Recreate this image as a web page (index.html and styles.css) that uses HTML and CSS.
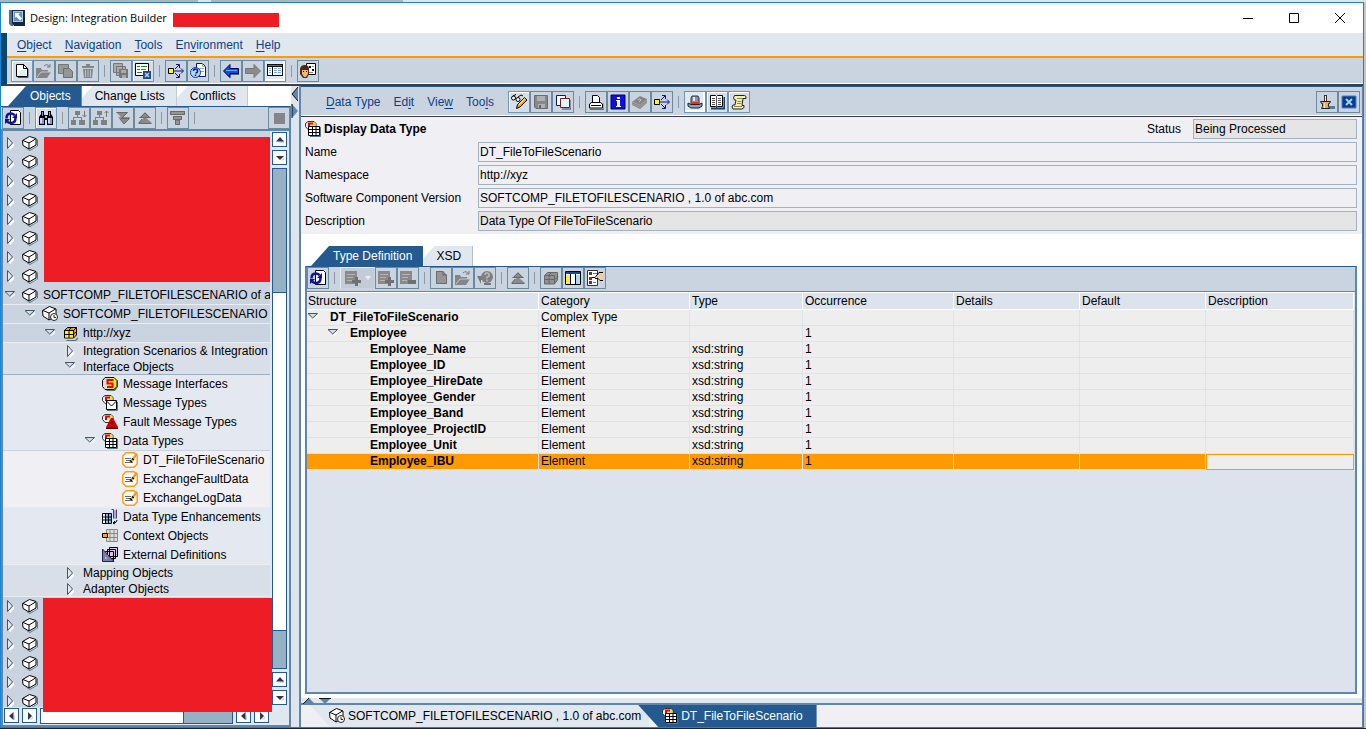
FILE: index.html
```html
<!DOCTYPE html>
<html lang="en">
<head>
    <meta charset="utf-8">
    <meta name="viewport" content="width=device-width, initial-scale=1">
    <title>Design: Integration Builder</title>
    <link rel="stylesheet" href="styles.css">
</head>
<body>
    <svg class="sprite" aria-hidden="true">
        <!-- application -->
        <symbol id="logo" viewBox="0 0 16 16"><path d="M0 0h4v16H2L0 14z" fill="#4f7290"/><path d="M3 0h13v16H5l-2-3z" fill="#17263c"/><path d="M4 1h10v11H4z" fill="#a9cbe6"/><path d="M5 2h8v9H5z" fill="#5f92c2"/><path d="M6 3h5L9.500 4.500l3.500 4-2 2-4-4L6 8z" fill="#fff"/></symbol>
        <symbol id="new" viewBox="0 0 16 16"><path d="M4 14.500h10V6" fill="none" stroke="#456"/><path d="M2.500 1.500h7l4 4v8h-11z" fill="#fff" stroke="#000"/><path d="M5 8l7-2v7H5z" fill="#d6f2f8"/><path d="M9.500 1.500v4h4" fill="none" stroke="#000"/></symbol>
        <symbol id="doc" viewBox="0 0 16 16"><path d="M3 1h7l4 4v9H3z" fill="#959595"/><path d="M10 1v4h4" fill="none" stroke="#666"/><path d="M3.500 1.500h6l4 4v8h-10z" fill="none" stroke="#6c6c6c"/></symbol>
        <symbol id="open" viewBox="0 0 16 16"><path d="M0 5h5l1 2h6v2h3l-4 6H0z" fill="#858585"/><path d="M1 14l4-5h10" fill="none" stroke="#c2c8ce"/><path d="M8 3q3-3 6 1m0-3v3h-3" fill="none" stroke="#777"/></symbol>
        <symbol id="copy" viewBox="0 0 16 16"><path d="M.5 1.500h10v9H.5z" fill="#999" stroke="#777"/><path d="M5.500 5.500h6l3 3v6h-9z" fill="#959595" stroke="#6e6e6e"/></symbol>
        <symbol id="trash" viewBox="0 0 16 16"><path d="M2 3h12v2H2zM6 1h4v2H6zM3 6h10l-1 9H4z" fill="#858585"/><path d="M5.500 7v7m2.500-7v7m2.500-7v7" stroke="#b8bec5"/></symbol>
        <symbol id="stack" viewBox="0 0 16 16"><path d="M.5.5h9v9h-9zM3.500 3.500h9v9h-9z" fill="#aaa" stroke="#777"/><path d="M6 6h9v9H7l-1-1z" fill="#777"/><path d="M8 7h5v3H8zM9 12h4v3H9z" fill="#aaa"/></symbol>
        <symbol id="listx" viewBox="0 0 16 16"><path d="M.5.500h13v12H.5z" fill="#fff" stroke="#000"/><path d="M2 3.500h3m1 0h6M2 6.500h3m1 0h5M2 9.500h5" stroke="#228622"/><path d="M8 8h8v8H8z" fill="#1c4b82"/><path d="M10 10l4 4m0-4l-4 4" stroke="#b5d0ee" stroke-width="1.500"/></symbol>
        <symbol id="where" viewBox="0 0 16 16"><path d="M.5 5.500h5v5h-5z" fill="#ff0" stroke="#000"/><path d="M6 8h9M7 6l4-4M7 10l4 4M13 5.500L15.500 8 13 10.500M8 1.500h3.500V5M8 14.500h3.500V11" fill="none" stroke="#10108a"/></symbol>
        <symbol id="helpdoc" viewBox="0 0 16 16"><path d="M6.500.5h6l3 3v10h-9z" fill="#fff" stroke="#10108a"/><path d="M12.500.5v3h3M9 5.500h5M9 8.500h5" fill="none" stroke="#8aa"/><circle cx="5.500" cy="9.500" r="5" fill="#a9dcfa" stroke="#143a90"/><path d="M3.500 8q0-2 2-2t2 2-2 2m0 1.500v1.500" fill="none" stroke="#10108a" stroke-width="1.500"/></symbol>
        <symbol id="left" viewBox="0 0 16 16"><path d="M1 9l6 6v-3h9V8H8" fill="#567"/><path d="M.5 8L7 1.500v4h8.500v5H7v4z" fill="#1848e8" stroke="#000068"/><path d="M3 7.500h11" stroke="#4bb8ff"/></symbol>
        <symbol id="right" viewBox="0 0 16 16"><path d="M15.500 8L9 1.500v4H.5v5H9v4z" fill="#8b8b8b" stroke="#777"/></symbol>
        <symbol id="panel" viewBox="0 0 16 16"><path d="M0 1h16v12H0z" fill="#111"/><path d="M1 4h4v8H1zM6 4h9v8H6z" fill="#fff"/><path d="M1 2h14v1H1z" fill="#2f75bd"/><path d="M2 5.500h2M2 7.500h2M2 9.500h2m3-4h3m1 0h3M7 7.500h3m1 0h3M7 9.500h3m1 0h3" stroke="#79a8db"/></symbol>
        <symbol id="user" viewBox="0 0 16 16"><path d="M6.500.5h9v11h-9z" fill="#fff" stroke="#000"/><path d="M9 3h2v2H9zM12 6h2v2h-2z" fill="#111"/><path d="M12 3.500h2M9 9.500h4" stroke="#888"/><path d="M0 7q0-5 5-5 4 0 4 4v5l-2 4H3l-3-4z" fill="#4b2a12"/><path d="M2 7h6v4l-2 3H4l-2-3z" fill="#f0b47a"/><path d="M3 8h1v1H3zM6 8h1v1H6z" fill="#000"/></symbol>

        <!-- object list toolbar -->
        <symbol id="refresh" viewBox="0 0 16 16"><path d="M5.500.5h8l2 2v12h-10z" fill="#fff" stroke="#000"/><path d="M1.500 8.500q0-5 4-5 3 0 4 2M10.500 8q0 5-4.500 5Q3 13 2 11" fill="none" stroke="#1111a0" stroke-width="2.500"/><path d="M12 3v5H7zM0 14V9h5z" fill="#1111a0"/></symbol>
        <symbol id="find" viewBox="0 0 16 16"><path d="M3 1h3v4l1 2v8H1V7l2-3zM10 1h3v3l2 3v8H9V7l1-2z" fill="#000"/><path d="M2 8h4v6H2zM10 8h4v6h-4zM4 2h1v4H4zM11 2h1v4h-1z" fill="#8f8fd8"/><path d="M2 8h2v5H2zM10 8h2v5h-2z" fill="#d5d5ff"/><path d="M6 5h4v5H6z" fill="#000"/><path d="M7 6h2v2H7z" fill="#b5b5f0"/></symbol>
        <symbol id="tree" viewBox="0 0 16 16"><path d="M4 1h5v4H4zM0 10h5v5H0zM8 10h6v5H8zM2 7h9v1H2zM2 8h1v2H2zM10 8h1v2h-1zM6 5h1v2H6z" fill="#808080"/><path d="M13.500 1v6M11.500 5l2 2 2-2" fill="none" stroke="#777"/></symbol>
        <symbol id="treeup" viewBox="0 0 16 16"><path d="M4 1h5v4H4zM0 10h5v5H0zM8 10h6v5H8zM2 7h9v1H2zM2 8h1v2H2zM10 8h1v2h-1zM6 5h1v2H6z" fill="#808080"/><path d="M13.500 1v6M11.500 3l2-2 2 2" fill="none" stroke="#777"/></symbol>
        <symbol id="ddown" viewBox="0 0 16 16"><path d="M1 2h12L7 8zM3 7h12l-6 7z" fill="#8a8a8a"/><path d="M1.500 2.500h11L7 8M6 8.500h8.500L9 14 5 9" fill="none" stroke="#696969"/></symbol>
        <symbol id="dup" viewBox="0 0 16 16"><path d="M2 8h12L8 2zM1 13h14L8 7z" fill="#8a8a8a"/><path d="M2.500 7.500h11M1.500 13.500h13M3 8l5-5 5 5M2 13l3-4" fill="none" stroke="#696969"/></symbol>
        <symbol id="filter" viewBox="0 0 16 16"><path d="M0 1h15v4H0zM3 6h9v4H3zM5 10h5v5H5z" fill="#959595"/><path d="M.5 1.500h14v3H.5zM3.500 6.500h8v3h-8zM5.500 10h4v4.500h-4z" fill="none" stroke="#696969"/></symbol>
        <symbol id="stop" viewBox="0 0 16 16"><path d="M3 3h11v11H3z" fill="#858585"/></symbol>

        <!-- tree -->
        <symbol id="tri" viewBox="0 0 9 14"><path d="M3 12l5-5v3l-4 4z" fill="#fff"/><path d="M1.500 1.500L6.500 7l-5 5.500z" fill="#e4e9ef" stroke="#4a5361"/></symbol>
        <symbol id="trid" viewBox="0 0 12 8"><path d="M6 8l5-5v2L7 8z" fill="#fff"/><path d="M1 1.500h9.500L5.700 6z" fill="#cfe0e8" stroke="#4a5361"/></symbol>
        <symbol id="cube" viewBox="0 0 16 16"><path d="M3 13l5 3 8-5V5l-1-1v7l-7 4z" fill="#557a86"/><path d="M.5 5.500l7-4 6.500 2v6.500l-7 4-6-3.500z" fill="#fff" stroke="#000"/><path d="M1 5.500L7 8l6.500-4M7 8v6" fill="none" stroke="#000"/></symbol>
        <symbol id="cubev" viewBox="0 0 16 16"><path d="M.5 4.500l7-4L14 3v7l-7 4-6-4z" fill="#fff" stroke="#000"/><path d="M1 4.500L7 7l6.500-4M7 7v7" fill="none" stroke="#000"/><circle cx="12" cy="11" r="3.500" fill="#fff" stroke="#222"/><path d="M12 9v2.500h2" fill="none" stroke="#222"/></symbol>
        <symbol id="pkg" viewBox="-2 -1 16 16"><path d="M2 14h9l3-3V5l1 1v6l-3 3H3z" fill="#557a86"/><path d="M.5 4.500l3-3h9v7.500l-3 3h-9z" fill="#e8a800" stroke="#000"/><path d="M1 5h8v6.500H1z" fill="#ffed20"/><path d="M.5 4.500h9V12M5 4.500V12M1 8.500h8l3-2.500M5 4l2.500-2.500M9.500 4.500l3-3" fill="none" stroke="#000"/></symbol>
        <symbol id="msgif" viewBox="0 0 16 16"><path d="M4 15h9l3-4V4" fill="#557a86"/><path d="M3 1.500h9l3 3v6L12 13.500H3L.5 10.500v-6z" fill="#ffed20" stroke="#000"/><path d="M4 2h3L5 7l2 6H3L1 10V4.500z" fill="#d9dde0"/><path d="M11.500 4h-6v3.500h5V11H5" fill="none" stroke="#e00" stroke-width="2"/></symbol>
        <symbol id="msg" viewBox="0 0 16 16"><path d="M3 .5h6l2 2v6H3l-2.500-3v-3z" fill="#eee" stroke="#333"/><path d="M7 1h2l1.500 2v4H7z" fill="#ffe01a"/><path d="M8 2.500H4V6" fill="none" stroke="#e00" stroke-width="2"/><path d="M5 15.500h10.500V7" fill="none" stroke="#557a86"/><path d="M4.500 5.500h10v9h-10z" fill="#fff" stroke="#000"/><path d="M4.500 6l5 5 5-5" fill="none" stroke="#000"/></symbol>
        <symbol id="fault" viewBox="0 0 16 16"><path d="M3 .5h6l2 2v6H3l-2.500-3v-3z" fill="#eee" stroke="#333"/><path d="M7 1h2l1.500 2v4H7z" fill="#ffe01a"/><path d="M8 2.500H4V6" fill="none" stroke="#e00" stroke-width="2"/><path d="M9 4h2l5 9v2H4v-2z" fill="#d40000"/><path d="M4 14.500h12" stroke="#500"/><path d="M10 7v4m0 1v2" stroke="#400"/></symbol>
        <symbol id="dt" viewBox="0 0 16 16"><path d="M3 .5h6l2 2v6H3l-2.500-3v-3z" fill="#eee" stroke="#333"/><path d="M7 1h2l1.500 2v4H7z" fill="#ffe01a"/><path d="M8 2.500H4V6" fill="none" stroke="#e00" stroke-width="2"/><path d="M5 15.500h10.500V6" fill="none" stroke="#557a86"/><path d="M3.500 5.500h11v9h-11zM3.500 8.500h11m-11 3h11M7.500 5.500v9m3.500-9v9" fill="#fff" stroke="#000"/></symbol>
        <symbol id="edit" viewBox="0 0 16 16"><path d="M4 .8h8l3.200 3.200v8L12 15.200H4L.8 12V4z" fill="#fff" stroke="#ff9c10" stroke-width="1.500"/><path d="M3 6.500h6M4 8.500h5M3 10.500h8" stroke="#666"/><path d="M8 9l6-8 2 1.500-6 7-3 1z" fill="#f09a1c"/><path d="M10 6.500l2 1.500M8 8.500l2 1.500" stroke="#000" stroke-width="1.500"/></symbol>
        <symbol id="enh" viewBox="0 0 16 16"><path d="M.5 4.500h9v10h-9z" fill="#fff" stroke="#000"/><path d="M4 5h5v9H4z" fill="#7ac0f4"/><path d="M0 8h10M0 11h10M3.500 4v11M6.500 4v11" stroke="#000"/><path d="M9.500.5h2v9M14.500.5v9" fill="none" stroke="#446"/><path d="M12 1h2v9h-2z" fill="#b9a6d6"/><path d="M15 11q0 3-4 3m2-2l-2 2 2 1" fill="none" stroke="#000"/></symbol>
        <symbol id="ctx" viewBox="0 0 16 16"><path d="M4.500 1.500h11v12h-11zM4 5.500h12M4 9.500h12M8 1v13M12 1v13" fill="#ddd" stroke="#888"/><path d="M.5 5.500h5v4h-5z" fill="#ffab00" stroke="#000"/></symbol>
        <symbol id="ext" viewBox="0 0 16 16"><path d="M7.500.5h8v9h-8zM5.500 2.500h8v9h-8zM3.500 4.500h8v9h-8z" fill="#d9c8e2" stroke="#000"/><path d="M.5 2v12.500H12z" fill="#7b7ba8" stroke="#224"/><path d="M3 9v3h3z" fill="#b5b5d0"/></symbol>

        <!-- data type editor -->
        <symbol id="glasses" viewBox="0 0 16 16"><circle cx="2.500" cy="4" r="2" fill="#fff" stroke="#000"/><circle cx="7" cy="5.500" r="2" fill="#fff" stroke="#000"/><path d="M2 2l3-1.500M7 3l3-2 2 1" fill="none" stroke="#000"/><path d="M5.500 14.500l1-4 7-7 2.500 2.500-7 7z" fill="#f0a020" stroke="#000"/><path d="M8 10.500l6-6" stroke="#ffe060" stroke-width="1.500"/></symbol>
        <symbol id="save" viewBox="0 0 16 16"><path d="M1.500 1.500h13v13H3l-1.500-1.500z" fill="#888" stroke="#6b6b6b"/><path d="M4 2h8v5H4zM5 10h7v4H5z" fill="#b0b0b0"/><path d="M6 11h2v3H6z" fill="#666"/></symbol>
        <symbol id="copy2" viewBox="0 0 16 16"><path d="M1.500 1.500h9v10h-9z" fill="#fff" stroke="#11118a"/><path d="M7 15h9V6" stroke="#446" fill="none"/><path d="M5.500 4.500h9v9h-9z" fill="#e5f6fb" stroke="#6b1f1f"/></symbol>
        <symbol id="print" viewBox="0 0 16 16"><path d="M4.500 9.500v-8h5l2 2v6" fill="#fff" stroke="#000"/><path d="M2 15.500h14V9" fill="none" stroke="#667"/><path d="M1.500 10l2-1.500h9l2 1.500v4h-13z" fill="#fff" stroke="#000"/><path d="M3 11.500h10" stroke="#000"/></symbol>
        <symbol id="info" viewBox="0 0 16 16"><path d="M1 1h14v14H1z" fill="#1010dc" stroke="#000070"/><path d="M7 3h3v2H7zM6 6h4v6h1v1H6v-1h1V7H6z" fill="#fff"/></symbol>
        <symbol id="book" viewBox="0 0 16 16"><path d="M0 8l8-6 7 3v4l-7 6-8-4z" fill="#858585"/><path d="M0 10l8 3 7-5M0 8l8 3 7-5" fill="none" stroke="#a4a4a4"/><path d="M6 6q2-2 3 0L7 8" fill="none" stroke="#c4c4c4"/></symbol>
        <symbol id="hat" viewBox="0 0 16 16"><path d="M5 2h6l1 2v6H4V4z" fill="#7f98af" stroke="#333"/><path d="M4 8h8v2.500H4z" fill="#f22"/><path d="M1 9l3 1.500h8L15 9v3l-3 2H4l-3-2z" fill="#8ba3b8" stroke="#222"/><path d="M6 3h2v4H6z" fill="#dfe8f0"/></symbol>
        <symbol id="pages" viewBox="0 0 16 16"><path d="M2 14.500h13.500V3" fill="none" stroke="#146" stroke-width="2"/><path d="M1.500 1.500h5l1 1 1-1h5v11h-5l-1 1-1-1h-5z" fill="#fff" stroke="#000"/><path d="M7.500 2v11M3 4.500h3m3 0h3M3 6.500h3m3 0h3M3 8.500h3m3 0h3M3 10.500h3m3 0h3" stroke="#555"/></symbol>
        <symbol id="scroll" viewBox="0 0 16 16"><path d="M3.500 1.500h10q2 0 1.500 3h-3l-1 7h2v2l-2 1.500h-9q-2-2 0-4h2l1-5H3.500q-2-2 0-4.500z" fill="#f4f0b0" stroke="#222"/><path d="M6 4.500h6M6.500 7.500h4M6 9.500h4M3 12.500h8" stroke="#8a8550"/></symbol>
        <symbol id="pin" viewBox="0 0 16 16"><path d="M10 12h6v3H8z" fill="#557a96"/><path d="M5 1h3v6H5z" fill="#333"/><path d="M6 2h1v5H6z" fill="#fff"/><path d="M1.500 7.500h10l-1 2h-1v3l1 2h-8l1-2v-3h-1z" fill="#deac76" stroke="#222"/><path d="M5.500 9v5" stroke="#ffe4bd"/></symbol>
        <symbol id="close" viewBox="0 0 16 16"><path d="M1 2h14v12H1z" fill="#0a3f86" stroke="#4a7bd0"/><path d="M5 5l6 6m0-6l-6 6" stroke="#a6cdf4" stroke-width="2"/></symbol>
        <symbol id="addrow" viewBox="0 0 16 16"><path d="M0 1h12v13H0z" fill="#8a8a8a"/><path d="M2 4.500h8M2 7.500h6M2 10.500h5" stroke="#b4b4b4"/><path d="M10 7h3v3h3v3h-3v3h-3v-3H7v-3h3z" fill="#707070"/></symbol>
        <symbol id="delrow" viewBox="0 0 16 16"><path d="M0 1h12v13H0z" fill="#8a8a8a"/><path d="M2 4.500h8M2 7.500h6M2 10.500h5" stroke="#b4b4b4"/><path d="M8 10h8v4H8z" fill="#707070"/></symbol>
        <symbol id="query" viewBox="0 0 16 16"><path d="M0 6h6v4H4v4z" fill="#777"/><circle cx="10" cy="7" r="6" fill="#808080"/><path d="M8 5q0-2 2-2t2 2-2 2v1.500m0 1v2" fill="none" stroke="#bbb" stroke-width="1.500"/><path d="M7 13h7v2H7z" fill="#777"/></symbol>
        <symbol id="gpkg" viewBox="0 0 16 16"><path d="M1.500 5.500l3-3h10v7.500l-3 4h-10z" fill="#929292" stroke="#666"/><path d="M2 5.500h9.500V14M6 6v8M2 9.500h10l3-3M6 5l3-3" fill="none" stroke="#666"/></symbol>
        <symbol id="columns" viewBox="0 0 16 16"><path d="M.5 1.500h15v13H.5z" fill="#fff" stroke="#000"/><path d="M1 2h14v2H1z" fill="#104c90"/><path d="M1 5h4v9H1z" fill="#ffed3a"/><path d="M5.500 4v10m5-10v10" stroke="#000"/><path d="M11 5h4v9h-4z" fill="#a7daf6"/></symbol>
        <symbol id="settings" viewBox="0 0 16 16"><path d="M.5.5h10v15H.5z" fill="#fff" stroke="#333"/><path d="M2 2h3v3H2zM2 11h3v3H2z" fill="#444"/><path d="M2 7h3v3H2z" fill="#e00"/><path d="M6 3.500h4M6 12.500h3" stroke="#777"/><path d="M9 6l3-3h4v7h-3l-2-2z" fill="#f1cda6"/><path d="M5 7.500h3l4-5h4M8 8.500h3l2 2h3" fill="none" stroke="#000"/></symbol>
        <symbol id="up" viewBox="0 0 8 6"><path d="M2 6h6V3z" fill="#cdd2ee"/><path d="M4 0l4 4.500H0z" fill="#333348"/></symbol>
        <symbol id="down" viewBox="0 0 8 6"><path d="M5 6l3-4v3z" fill="#cdd2ee"/><path d="M4 5L0 1h8z" fill="#333348"/></symbol>
        <symbol id="prev" viewBox="0 0 6 8"><path d="M3 7l3-5v6z" fill="#cdd2ee"/><path d="M0 4l4.500-4v8z" fill="#333348"/></symbol>
        <symbol id="next" viewBox="0 0 6 8"><path d="M2 8l4-4v3z" fill="#cdd2ee"/><path d="M5 4L1 0v8z" fill="#333348"/></symbol>
    </svg>

    <div class="desktop-strip"></div>
    <div class="window">
        <header class="titlebar">
            <svg class="icon"><use href="#logo"/></svg>
            <h1 class="window-title">Design: Integration Builder</h1>
            <span class="redacted"></span>
            <div class="window-buttons">
                <button aria-label="Minimize"><svg viewBox="0 0 12 12"><path d="M1 6.500h10"/></svg></button>
                <button aria-label="Maximize"><svg viewBox="0 0 12 12"><path d="M1.500 1.500h9v9h-9z"/></svg></button>
                <button aria-label="Close"><svg viewBox="0 0 12 12"><path d="M1 1l10 10M11 1L1 11"/></svg></button>
            </div>
        </header>

        <div class="app-bars">
            <nav class="menubar">
                <button><u>O</u>bject</button>
                <button><u>N</u>avigation</button>
                <button><u>T</u>ools</button>
                <button>En<u>v</u>ironment</button>
                <button><u>H</u>elp</button>
            </nav>
            <div class="toolbar main-toolbar">
                <button class="tool lit" aria-label="New"><svg class="icon"><use href="#new"/></svg></button>
                <button class="tool" aria-label="Open" disabled><svg class="icon"><use href="#open"/></svg></button>
                <button class="tool" aria-label="Copy" disabled><svg class="icon"><use href="#copy"/></svg></button>
                <button class="tool" aria-label="Delete" disabled><svg class="icon"><use href="#trash"/></svg></button>
                <i class="sep"></i>
                <button class="tool" aria-label="Transport" disabled><svg class="icon"><use href="#stack"/></svg></button>
                <button class="tool lit" aria-label="Close list"><svg class="icon"><use href="#listx"/></svg></button>
                <i class="sep"></i>
                <button class="tool" aria-label="Where used"><svg class="icon"><use href="#where"/></svg></button>
                <button class="tool" aria-label="Find object"><svg class="icon"><use href="#helpdoc"/></svg></button>
                <i class="sep"></i>
                <button class="tool" aria-label="Back"><svg class="icon"><use href="#left"/></svg></button>
                <button class="tool" aria-label="Forward" disabled><svg class="icon"><use href="#right"/></svg></button>
                <button class="tool pressed" aria-label="Navigation area"><svg class="icon"><use href="#panel"/></svg></button>
                <i class="sep"></i>
                <button class="tool" aria-label="User settings"><svg class="icon"><use href="#user"/></svg></button>
            </div>
        </div>

        <main class="workspace">
            <aside class="browser">
                <div class="tabs">
                    <button class="tab active">Objects</button>
                    <button class="tab">Change Lists</button>
                    <button class="tab">Conflicts</button>
                </div>
                <div class="toolbar">
                    <button class="tool" aria-label="Refresh"><svg class="icon"><use href="#refresh"/></svg></button>
                    <i class="sep"></i>
                    <button class="tool lit" aria-label="Find"><svg class="icon"><use href="#find"/></svg></button>
                    <i class="sep"></i>
                    <button class="tool" aria-label="Expand" disabled><svg class="icon"><use href="#tree"/></svg></button>
                    <button class="tool" aria-label="Collapse" disabled><svg class="icon"><use href="#treeup"/></svg></button>
                    <button class="tool" aria-label="Next level" disabled><svg class="icon"><use href="#ddown"/></svg></button>
                    <button class="tool" aria-label="Previous level" disabled><svg class="icon"><use href="#dup"/></svg></button>
                    <i class="sep"></i>
                    <button class="tool" aria-label="Filter" disabled><svg class="icon"><use href="#filter"/></svg></button>
                    <i class="sep"></i>
                    <button class="tool push" aria-label="Stop" disabled><svg class="icon"><use href="#stop"/></svg></button>
                </div>
                <div class="tree-area">
                    <ul class="tree">
                        <li class="node"><svg class="twist"><use href="#tri"/></svg><svg class="icon"><use href="#cube"/></svg></li>
                        <li class="node"><svg class="twist"><use href="#tri"/></svg><svg class="icon"><use href="#cube"/></svg></li>
                        <li class="node"><svg class="twist"><use href="#tri"/></svg><svg class="icon"><use href="#cube"/></svg></li>
                        <li class="node"><svg class="twist"><use href="#tri"/></svg><svg class="icon"><use href="#cube"/></svg></li>
                        <li class="node"><svg class="twist"><use href="#tri"/></svg><svg class="icon"><use href="#cube"/></svg></li>
                        <li class="node"><svg class="twist"><use href="#tri"/></svg><svg class="icon"><use href="#cube"/></svg></li>
                        <li class="node"><svg class="twist"><use href="#tri"/></svg><svg class="icon"><use href="#cube"/></svg></li>
                        <li class="node"><svg class="twist"><use href="#tri"/></svg><svg class="icon"><use href="#cube"/></svg></li>
                        <li class="node end"><svg class="twist open"><use href="#trid"/></svg><svg class="icon"><use href="#cube"/></svg>SOFTCOMP_FILETOFILESCENARIO of abc.com</li>
                        <li class="node l1 end"><svg class="twist open"><use href="#trid"/></svg><svg class="icon"><use href="#cubev"/></svg>SOFTCOMP_FILETOFILESCENARIO ,</li>
                        <li class="node l2 end"><svg class="twist open"><use href="#trid"/></svg><svg class="icon"><use href="#pkg"/></svg>http://xyz</li>
                        <li class="node l3 folder"><svg class="twist"><use href="#tri"/></svg>Integration Scenarios &amp; Integration</li>
                        <li class="node l3 folder rule"><svg class="twist open"><use href="#trid"/></svg>Interface Objects</li>
                        <li class="node l4 pale"><svg class="icon"><use href="#msgif"/></svg>Message Interfaces</li>
                        <li class="node l4 pale"><svg class="icon"><use href="#msg"/></svg>Message Types</li>
                        <li class="node l4 pale"><svg class="icon"><use href="#fault"/></svg>Fault Message Types</li>
                        <li class="node l4 pale branch"><svg class="twist open"><use href="#trid"/></svg><svg class="icon"><use href="#dt"/></svg>Data Types</li>
                        <li class="node l5 leaf"><svg class="icon"><use href="#edit"/></svg>DT_FileToFileScenario</li>
                        <li class="node l5 leaf"><svg class="icon"><use href="#edit"/></svg>ExchangeFaultData</li>
                        <li class="node l5 leaf end"><svg class="icon"><use href="#edit"/></svg>ExchangeLogData</li>
                        <li class="node l4 pale"><svg class="icon"><use href="#enh"/></svg>Data Type Enhancements</li>
                        <li class="node l4 pale"><svg class="icon"><use href="#ctx"/></svg>Context Objects</li>
                        <li class="node l4 pale end"><svg class="icon"><use href="#ext"/></svg>External Definitions</li>
                        <li class="node l3 folder"><svg class="twist"><use href="#tri"/></svg>Mapping Objects</li>
                        <li class="node l3 folder end"><svg class="twist"><use href="#tri"/></svg>Adapter Objects</li>
                        <li class="node"><svg class="twist"><use href="#tri"/></svg><svg class="icon"><use href="#cube"/></svg></li>
                        <li class="node"><svg class="twist"><use href="#tri"/></svg><svg class="icon"><use href="#cube"/></svg></li>
                        <li class="node"><svg class="twist"><use href="#tri"/></svg><svg class="icon"><use href="#cube"/></svg></li>
                        <li class="node"><svg class="twist"><use href="#tri"/></svg><svg class="icon"><use href="#cube"/></svg></li>
                        <li class="node"><svg class="twist"><use href="#tri"/></svg><svg class="icon"><use href="#cube"/></svg></li>
                        <li class="node"><svg class="twist"><use href="#tri"/></svg><svg class="icon"><use href="#cube"/></svg></li>
                    </ul>
                    <div class="vscroll">
                        <button aria-label="Scroll up"><svg class="arrow"><use href="#up"/></svg></button>
                        <button aria-label="Scroll down"><svg class="arrow"><use href="#down"/></svg></button>
                        <div class="track"><div class="thumb"></div></div>
                        <button aria-label="Scroll up"><svg class="arrow"><use href="#up"/></svg></button>
                        <button aria-label="Scroll down"><svg class="arrow"><use href="#down"/></svg></button>
                    </div>
                    <div class="hscroll">
                        <button aria-label="Scroll left"><svg class="arrow side"><use href="#prev"/></svg></button>
                        <button aria-label="Scroll right"><svg class="arrow side"><use href="#next"/></svg></button>
                        <div class="track"><div class="thumb"></div></div>
                        <button aria-label="Scroll left"><svg class="arrow side"><use href="#prev"/></svg></button>
                        <button aria-label="Scroll right"><svg class="arrow side"><use href="#next"/></svg></button>
                    </div>
                    <div class="mask mask-top"></div>
                    <div class="mask mask-bottom"></div>
                </div>
            </aside>

            <div class="splitter">
                <svg viewBox="0 0 8 36"><path d="M7 1L1 8l6 7z" fill="#5f87ad"/><path d="M7 1L1 8l6 7" fill="none" stroke="#111"/><path d="M1 18l6 7-6 7z" fill="#5f87ad"/><path d="M1 18v14" stroke="#111"/></svg>
            </div>

            <section class="editor">
                <div class="editor-bar">
                    <nav class="menubar">
                        <button><u>D</u>ata Type</button>
                        <button>Ed<u>i</u>t</button>
                        <button>Vie<u>w</u></button>
                        <button>Too<u>l</u>s</button>
                    </nav>
                    <div class="toolbar">
                        <button class="tool lit" aria-label="Switch between display and edit"><svg class="icon"><use href="#glasses"/></svg></button>
                        <button class="tool" aria-label="Save" disabled><svg class="icon"><use href="#save"/></svg></button>
                        <button class="tool" aria-label="Copy object"><svg class="icon"><use href="#copy2"/></svg></button>
                        <i class="sep"></i>
                        <button class="tool" aria-label="Print"><svg class="icon"><use href="#print"/></svg></button>
                        <button class="tool" aria-label="Properties"><svg class="icon"><use href="#info"/></svg></button>
                        <button class="tool" aria-label="Documentation" disabled><svg class="icon"><use href="#book"/></svg></button>
                        <button class="tool" aria-label="Where used"><svg class="icon"><use href="#where"/></svg></button>
                        <i class="sep"></i>
                        <button class="tool pressed" aria-label="Header"><svg class="icon"><use href="#hat"/></svg></button>
                        <button class="tool lit" aria-label="Details"><svg class="icon"><use href="#pages"/></svg></button>
                        <button class="tool lit" aria-label="History"><svg class="icon"><use href="#scroll"/></svg></button>
                        <button class="tool push" aria-label="Detach"><svg class="icon"><use href="#pin"/></svg></button>
                        <button class="tool" aria-label="Close editor"><svg class="icon"><use href="#close"/></svg></button>
                    </div>
                </div>

                <form class="details">
                    <div class="details-head">
                        <svg class="icon"><use href="#dt"/></svg>
                        <h2>Display Data Type</h2>
                        <label for="status">Status</label>
                        <input id="status" class="field grey" value="Being Processed" readonly>
                    </div>
                    <label for="name">Name</label>
                    <input id="name" class="field" value="DT_FileToFileScenario" readonly>
                    <label for="namespace">Namespace</label>
                    <input id="namespace" class="field" value="http://xyz" readonly>
                    <label for="version">Software Component Version</label>
                    <input id="version" class="field" value="SOFTCOMP_FILETOFILESCENARIO , 1.0 of abc.com" readonly>
                    <label for="description">Description</label>
                    <input id="description" class="field grey" value="Data Type Of FileToFileScenario" readonly>
                </form>

                <div class="definition">
                    <div class="tabs">
                        <button class="tab active">Type Definition</button>
                        <button class="tab">XSD</button>
                    </div>
                    <div class="definition-box">
                        <div class="toolbar">
                            <button class="tool" aria-label="Refresh"><svg class="icon"><use href="#refresh"/></svg></button>
                            <i class="sep"></i>
                            <button class="tool drop" aria-label="Add row" disabled><svg class="icon"><use href="#addrow"/></svg><svg class="caret" viewBox="0 0 6 4"><path d="M0 0h6L3 4z" fill="#eef2f6"/></svg></button>
                            <button class="tool" aria-label="Insert row" disabled><svg class="icon"><use href="#addrow"/></svg></button>
                            <button class="tool" aria-label="Delete row" disabled><svg class="icon"><use href="#delrow"/></svg></button>
                            <i class="sep"></i>
                            <button class="tool" aria-label="New reference" disabled><svg class="icon"><use href="#doc"/></svg></button>
                            <button class="tool" aria-label="Open reference" disabled><svg class="icon"><use href="#open"/></svg></button>
                            <button class="tool" aria-label="Search help" disabled><svg class="icon"><use href="#query"/></svg></button>
                            <i class="sep"></i>
                            <button class="tool" aria-label="Collapse all" disabled><svg class="icon"><use href="#dup"/></svg></button>
                            <i class="sep"></i>
                            <button class="tool" aria-label="Namespace" disabled><svg class="icon"><use href="#gpkg"/></svg></button>
                            <button class="tool" aria-label="Columns"><svg class="icon"><use href="#columns"/></svg></button>
                            <button class="tool" aria-label="Settings"><svg class="icon"><use href="#settings"/></svg></button>
                        </div>
                        <div class="grid-area">
                            <table class="grid">
                                <colgroup>
                                    <col class="c-structure"><col class="c-mid"><col class="c-type"><col class="c-mid"><col class="c-small"><col class="c-small"><col>
                                </colgroup>
                                <thead>
                                    <tr><th>Structure</th><th>Category</th><th>Type</th><th>Occurrence</th><th>Details</th><th>Default</th><th>Description</th></tr>
                                </thead>
                                <tbody>
                                    <tr><td class="s0"><svg class="twist open"><use href="#trid"/></svg>DT_FileToFileScenario</td><td>Complex Type</td><td></td><td></td><td></td><td></td><td></td></tr>
                                    <tr><td class="s1"><svg class="twist open"><use href="#trid"/></svg>Employee</td><td>Element</td><td></td><td>1</td><td></td><td></td><td></td></tr>
                                    <tr><td class="s2">Employee_Name</td><td>Element</td><td>xsd:string</td><td>1</td><td></td><td></td><td></td></tr>
                                    <tr><td class="s2">Employee_ID</td><td>Element</td><td>xsd:string</td><td>1</td><td></td><td></td><td></td></tr>
                                    <tr><td class="s2">Employee_HireDate</td><td>Element</td><td>xsd:string</td><td>1</td><td></td><td></td><td></td></tr>
                                    <tr><td class="s2">Employee_Gender</td><td>Element</td><td>xsd:string</td><td>1</td><td></td><td></td><td></td></tr>
                                    <tr><td class="s2">Employee_Band</td><td>Element</td><td>xsd:string</td><td>1</td><td></td><td></td><td></td></tr>
                                    <tr><td class="s2">Employee_ProjectID</td><td>Element</td><td>xsd:string</td><td>1</td><td></td><td></td><td></td></tr>
                                    <tr><td class="s2">Employee_Unit</td><td>Element</td><td>xsd:string</td><td>1</td><td></td><td></td><td></td></tr>
                                    <tr class="selected"><td class="s2">Employee_IBU</td><td>Element</td><td>xsd:string</td><td>1</td><td></td><td></td><td class="focus"></td></tr>
                                </tbody>
                            </table>
                        </div>
                    </div>
                </div>

                <div class="fold">
                    <svg viewBox="0 0 28 6"><path d="M0 6l6-6 6 6z" fill="#5f87ad"/><path d="M0 6l6-6" stroke="#111"/><path d="M16 0h12l-6 6z" fill="#5f87ad"/><path d="M16 .5h12" stroke="#111"/></svg>
                </div>
                <div class="open-objects">
                    <button class="doc-tab"><svg class="icon"><use href="#cubev"/></svg>SOFTCOMP_FILETOFILESCENARIO , 1.0 of abc.com</button>
                    <button class="doc-tab active"><svg class="icon"><use href="#dt"/></svg>DT_FileToFileScenario</button>
                </div>
            </section>
        </main>
    </div>
    <div class="taskbar-edge"></div>
</body>
</html>
```

FILE: styles.css
```css
* {
    box-sizing: border-box;
}
body {
    margin: 0;
    height: 100vh;
    display: flex;
    flex-direction: column;
    overflow: hidden;
    background: #c4c8cc;
    color: #000;
    font: 12px/16px "Liberation Sans", Arial, sans-serif;
}
button, input {
    font: inherit;
    color: inherit;
    margin: 0;
    padding: 0;
    border: 0;
    background: none;
    border-radius: 0;
}
h1, h2, ul {
    margin: 0;
    padding: 0;
    font-size: 12px;
    list-style: none;
}
.sprite {
    display: none;
}
.icon {
    width: 16px;
    height: 16px;
    flex: none;
    display: block;
}
.desktop-strip {
    height: 2px;
    flex: none;
    background: linear-gradient(90deg, #b4b4b4 0 198px, #e4e4e4 198px 211px, #b4b4b4 211px 403px, #e4e4e4 403px);
}
.taskbar-edge {
    height: 1px;
    flex: none;
    background: #1c2430;
}

/* window frame */
.window {
    flex: 1;
    min-height: 0;
    margin-right: 2px;
    display: flex;
    flex-direction: column;
    border: 1px solid #1883d7;
    background: #fff;
}
.titlebar {
    height: 30px;
    flex: none;
    display: flex;
    align-items: center;
    padding-left: 8px;
}
.window-title {
    margin-left: 5px;
    font: 11px/16px "Open Sans", "Noto Sans", sans-serif;
    width: 143px;
    white-space: nowrap;
}
.redacted {
    width: 106px;
    height: 14px;
    margin-top: 4px;
    background: #ee1c25;
}
.window-buttons {
    margin-left: auto;
    display: flex;
}
.window-buttons button {
    width: 46px;
    height: 28px;
    display: flex;
    align-items: center;
    justify-content: center;
}
.window-buttons svg {
    width: 12px;
    height: 12px;
    fill: none;
    stroke: #000;
}

/* menus and toolbars */
.app-bars {
    flex: none;
    border-left: 6px solid #08466e;
    border-bottom: 2px solid #3c4046;
    background: #cad4e0;
}
.app-bars .menubar {
    height: 25px;
    padding-left: 10px;
    background: #e0e7ee;
    border-bottom: 2px solid #ff9a00;
}
.menubar {
    display: flex;
    align-items: center;
    gap: 13px;
    color: #0c4189;
}
.menubar button {
    line-height: 20px;
}
.menubar u {
    text-underline-offset: 2px;
}
.toolbar {
    display: flex;
    align-items: center;
    background: #cad4e0;
}
.main-toolbar {
    height: 26px;
    padding-left: 4px;
    border-bottom: 1px solid #fff;
}
.tool {
    width: 22px;
    height: 22px;
    flex: none;
    display: flex;
    align-items: center;
    justify-content: center;
    border: 1px solid #6b8b9d;
}
.tool.lit {
    border-color: #6f95b8;
    background: #d6dee8;
    box-shadow: inset 1px 1px #fff;
}
.tool.pressed {
    border-color: #6f95b8;
    background: #e2e9f1;
    box-shadow: inset -2px -2px #fff;
}
.tool.push {
    margin-left: auto;
}
.tool.drop {
    width: 35px;
    gap: 4px;
    border-color: #e8edf2 #cad4e0 #cad4e0 #e8edf2;
    background: #c3ccd6;
}
.caret {
    width: 6px;
    height: 4px;
}
.sep {
    width: 11px;
    height: 12px;
    flex: none;
    background: linear-gradient(90deg, transparent 5px, #8d99a6 5px 6px, transparent 6px);
}

/* tabs */
.tabs {
    display: flex;
    flex: none;
    height: 20px;
}
.tab {
    padding: 0 11px 0 13px;
    background: #e0e7ee;
    border-right: 1px solid #b4bfca;
    clip-path: polygon(11px 0, 100% 0, 100% 100%, 0 100%, 0 12px);
}
.tab.active {
    padding: 0 11px 0 22px;
    color: #fff;
    background: #245a8f;
    border: 0;
    clip-path: polygon(18px 0, 100% 0, 100% 100%, 0 100%);
}

/* object browser */
.workspace {
    flex: 1;
    min-height: 0;
    display: flex;
}
.browser {
    width: 290px;
    flex: none;
    display: flex;
    flex-direction: column;
}
.browser .tabs {
    padding-left: 7px;
}
.browser .toolbar {
    flex: none;
    height: 25px;
    padding-left: 1px;
    border-top: 1px solid #245a8f;
    border-right: 1px solid #5f87ad;
    border-bottom: 2px solid #5f87ad;
}
.tree-area {
    flex: 1;
    min-height: 0;
    position: relative;
    display: grid;
    grid-template-columns: 1fr 19px;
    grid-template-rows: 1fr 18px;
    border: solid #5f87ad;
    border-width: 0 2px 2px;
    background: #e0e7ee;
}
.tree {
    min-height: 0;
    overflow: hidden;
    padding-top: 3px;
    background: #cad4e0;
    line-height: 18px;
}
.node {
    height: 19px;
    display: flex;
    align-items: center;
    white-space: nowrap;
    border-bottom: 1px solid transparent;
}
.node .icon {
    margin: 0 5px 0 7px;
}
.node .twist {
    margin-left: 3px;
}
.node .twist.open {
    margin-left: 1px;
}
.node .twist.open + .icon {
    margin-left: 6px;
}
.twist {
    width: 9px;
    height: 14px;
    flex: none;
    display: block;
}
.twist.open {
    width: 12px;
    height: 8px;
    margin-bottom: 3px;
}
.l1 {
    padding-left: 20px;
}
.l2 {
    padding-left: 40px;
}
.l3 {
    padding-left: 60px;
}
.l4 {
    padding-left: 92px;
}
.l4.branch {
    padding-left: 80px;
}
.l5 {
    padding-left: 112px;
}
.node.folder {
    height: 16px;
    background: #d9dfe9;
}
.node.folder .twist {
    margin-right: 8px;
}
.node.folder .twist.open {
    margin-right: 7px;
}
.node.pale {
    background: #e4e8f0;
}
.node.leaf {
    background: #f0eff4;
}
.node.end {
    border-color: #e9edf2;
}
.node.rule {
    border-color: #9fafc0;
}
.node.branch {
    border-color: #c7d2de;
}

/* scroll bars */
.vscroll, .hscroll {
    display: flex;
    gap: 3px;
}
.vscroll {
    flex-direction: column;
    padding: 1px 2px 2px;
}
.hscroll {
    grid-column: 1 / 3;
    padding: 1px 20px 1px 1px;
}
.vscroll button, .hscroll button {
    width: 15px;
    height: 15px;
    flex: none;
    display: flex;
    align-items: center;
    justify-content: center;
    border: 1px solid #245a8f;
    background: #fff;
}
.arrow {
    width: 8px;
    height: 6px;
}
.arrow.side {
    width: 6px;
    height: 8px;
}
.track {
    flex: 1;
    display: flex;
    border: 1px solid #245a8f;
    background: #96b1c3;
}
.vscroll .track {
    flex-direction: column;
    padding: 123px 0 37px;
}
.thumb {
    flex: 1;
    background: #fff;
    border: solid #245a8f;
    border-width: 1px 0;
}
.hscroll .thumb {
    flex: none;
    width: 75%;
    border-width: 0 1px 0 0;
}
.mask {
    position: absolute;
    background: #ee1c25;
}
.mask-top {
    top: 6px;
    left: 41px;
    right: 19px;
    height: 145px;
}
.mask-bottom {
    bottom: 13px;
    left: 40px;
    right: 17px;
    height: 114px;
}

/* splitter */
.splitter {
    width: 8px;
    flex: none;
    background: #dfe5ec;
}
.splitter svg {
    width: 8px;
    height: 36px;
    display: block;
}

/* editor */
.editor {
    flex: 1;
    min-width: 0;
    display: flex;
    flex-direction: column;
    border-left: 2px solid #5f87ad;
    border-right: 1px solid #5f87ad;
}
.editor-bar {
    height: 31px;
    flex: none;
    display: flex;
    align-items: center;
    padding: 0 2px 0 25px;
    background: #cad4e0;
    border-top: 1px solid #245a8f;
    border-bottom: 1px solid #3c4046;
    box-shadow: inset 0 -1px #fff;
}
.editor-bar .menubar {
    margin-right: 14px;
}
.editor-bar .toolbar {
    flex: 1;
}
.details {
    flex: none;
    display: grid;
    grid-template-columns: 173px 1fr;
    gap: 3px 0;
    align-items: center;
    padding: 2px 5px 3px 4px;
    background: #f0eff4;
}
.details-head {
    grid-column: 1 / 3;
    display: flex;
    align-items: center;
}
.details-head h2 {
    margin: 0 auto 0 3px;
}
.details-head .field {
    width: 164px;
    margin-left: 12px;
}
.field {
    height: 20px;
    min-width: 0;
    padding: 0 1px;
    border: 1px solid #a3b2c1;
    background: #f0eff4;
    outline: 0;
}
.field.grey {
    background: #e5e5e5;
}
.definition {
    flex: 1;
    min-height: 0;
    display: flex;
    flex-direction: column;
    padding: 12px 5px 4px 4px;
}
.definition .tabs {
    padding-left: 6px;
}
.definition-box {
    flex: 1;
    min-height: 0;
    display: flex;
    flex-direction: column;
    border: 2px solid #5f87ad;
    border-top: 1px solid #245a8f;
    background: #dce3ec;
}
.definition-box .toolbar {
    height: 25px;
    flex: none;
    padding-bottom: 2px;
    border-bottom: 1px solid #5f87ad;
}
.grid-area {
    flex: 1;
    min-height: 0;
    padding-right: 1px;
    overflow: hidden;
}
.grid {
    width: 100%;
    table-layout: fixed;
    border-collapse: separate;
    border-spacing: 0;
}
.c-structure {
    width: 232px;
}
.c-mid {
    width: 151px;
}
.c-type {
    width: 113px;
}
.c-small {
    width: 126px;
}
.grid th {
    height: 18px;
    padding: 0 0 0 1px;
    text-align: left;
    font-weight: normal;
    border: solid #fff;
    border-width: 1px 1px 1px 0;
    line-height: 16px;
}
.grid th + th, .grid td + td {
    padding-left: 2px;
}
.grid td {
    height: 16px;
    padding: 0;
    line-height: 15px;
    background: #eee;
    border: solid #dce3ec;
    border-width: 0 1px 1px 0;
}
.grid td:first-child {
    font-weight: bold;
}
.grid .twist {
    float: left;
    margin: 2px 11px 0 0;
}
.grid .s1 {
    padding-left: 20px;
}
.grid .s2 {
    padding-left: 63px;
}
.grid .selected td {
    background: #ff9a00;
}
.grid .selected .focus {
    background: #eee;
    border: 1px solid #ff9a00;
}

/* open documents */
.fold {
    height: 7px;
    flex: none;
    padding: 0 2px;
    background: #e0e7ee;
    border-bottom: 2px solid #5f87ad;
}
.fold svg {
    width: 28px;
    height: 6px;
    display: block;
}
.open-objects {
    height: 22px;
    flex: none;
    display: flex;
    padding-left: 9px;
    background: #f0eff4;
}
.doc-tab {
    display: flex;
    align-items: center;
    gap: 3px;
    padding: 0 8px 0 19px;
    background: #e0e7ee;
    clip-path: polygon(0 0, 100% 0, 100% 100%, 20px 100%);
}
.doc-tab.active {
    margin-left: -11px;
    padding: 0 14px 0 24px;
    color: #fff;
    background: #245a8f;
}
```
